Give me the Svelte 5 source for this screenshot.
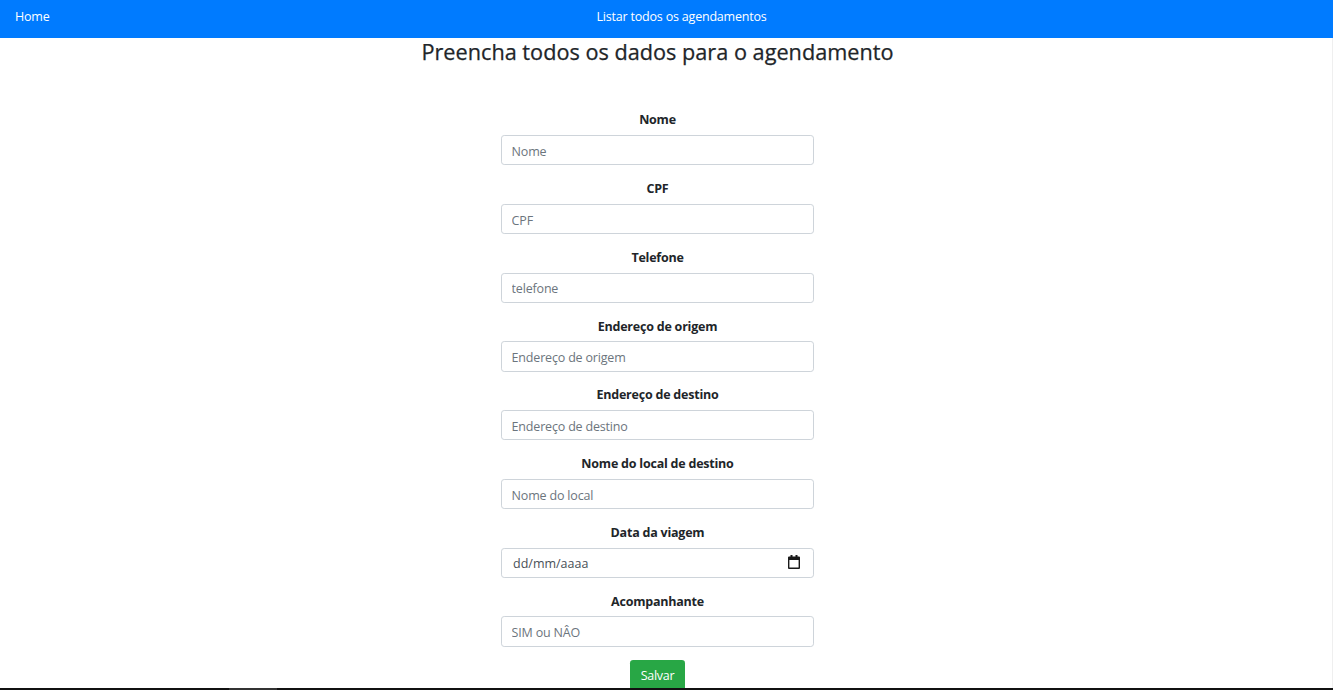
<script>
	const fields = [
		{ label: "Nome", placeholder: "Nome" },
		{ label: "CPF", placeholder: "CPF" },
		{ label: "Telefone", placeholder: "telefone" },
		{ label: "Endereço de origem", placeholder: "Endereço de origem" },
		{ label: "Endereço de destino", placeholder: "Endereço de destino" },
		{ label: "Nome do local de destino", placeholder: "Nome do local" },
		{ label: "Data da viagem", date: true },
		{ label: "Acompanhante", placeholder: "SIM ou NÂO" },
	];
</script>

<div class="window">
	<nav class="navbar">
		<a class="home" href="#home">Home</a>
		<a class="list" href="#list">Listar todos os agendamentos</a>
	</nav>

	<main class="content">
		<h1>Preencha todos os dados para o agendamento</h1>

		<form class="form">
			{#each fields as field}
				<div class="group">
					<label for={field.label}>{field.label}</label>
					{#if field.date}
						<div class="control date" id={field.label}>
							<span>dd/mm/aaaa</span>
							<svg width="12" height="14" viewBox="0 0 12 14" aria-hidden="true">
								<path d="M2.5 0h2v1.5h3V0h2v1.5H11a1 1 0 0 1 1 1V13a1 1 0 0 1-1 1H1a1 1 0 0 1-1-1V2.5a1 1 0 0 1 1-1h1.5z M1.4 5v7.6h9.2V5z" fill="#1a1a1a" fill-rule="evenodd" />
							</svg>
						</div>
					{:else}
						<input class="control" id={field.label} type="text" placeholder={field.placeholder} />
					{/if}
				</div>
			{/each}
			<button class="save" type="button">Salvar</button>
		</form>
	</main>

	<div class="taskbar"><span class="task"></span></div>
</div>

<style>
	:global(body) {
		margin: 0;
		background: #fff;
	}

	.window {
		height: 690px;
		display: flex;
		flex-direction: column;
		overflow: hidden;
		font-family: "Open Sans", "Noto Sans", sans-serif;
		color: #212529;
	}

	.navbar {
		flex: none;
		box-sizing: border-box;
		height: 38px;
		display: flex;
		align-items: center;
		padding: 0 0 5px 15px;
		background: #007bff;
		font-size: 12.5px;
		letter-spacing: -0.2px;
	}

	.navbar a {
		color: #fff;
		text-decoration: none;
	}

	.list {
		margin-left: 547px;
	}

	.content {
		flex: 1;
		min-height: 0;
		overflow: hidden;
		padding-right: 17px;
		border-right: 1px solid #efefef;
		display: flex;
		flex-direction: column;
		align-items: center;
	}

	h1 {
		margin: 0;
		font-size: 21.7px;
		line-height: 28px;
		font-weight: 500;
		-webkit-text-stroke: 0.25px #212529;
	}

	.form {
		margin-top: 44.3px;
		width: 313px;
		display: flex;
		flex-direction: column;
		align-items: center;
	}

	.group {
		width: 100%;
		height: 55.2px;
		margin-bottom: 13.57px;
		display: flex;
		flex-direction: column;
		align-items: center;
	}

	label {
		height: 19.2px;
		line-height: 19.2px;
		margin-bottom: 5.6px;
		font-size: 12.5px;
		font-weight: 700;
		letter-spacing: -0.22px;
	}

	.control {
		box-sizing: border-box;
		width: 100%;
		height: 30.4px;
		flex: none;
		padding: 2px 9.6px 0;
		border: 1px solid #ced4da;
		border-radius: 3.2px;
		background: #fff;
		color: #495057;
		font: inherit;
		font-size: 12.5px;
		letter-spacing: -0.18px;
		outline: none;
	}

	.control::placeholder {
		color: #6c757d;
		opacity: 1;
	}

	.date {
		display: flex;
		align-items: center;
		justify-content: space-between;
		padding-left: 11px;
		padding-right: 13px;
		letter-spacing: 0;
	}

	.date svg {
		margin-bottom: 3px;
	}

	.save {
		flex: none;
		margin-top: -0.2px;
		width: 55px;
		height: 31px;
		padding: 0;
		border: 0;
		border-radius: 3.2px;
		background: #28a745;
		color: #fff;
		font: inherit;
		font-size: 12.5px;
		letter-spacing: -0.3px;
	}

	.taskbar {
		flex: none;
		height: 2px;
		background: #111;
		display: flex;
	}

	.task {
		width: 48px;
		margin-left: 229px;
		background: #333;
	}
</style>
